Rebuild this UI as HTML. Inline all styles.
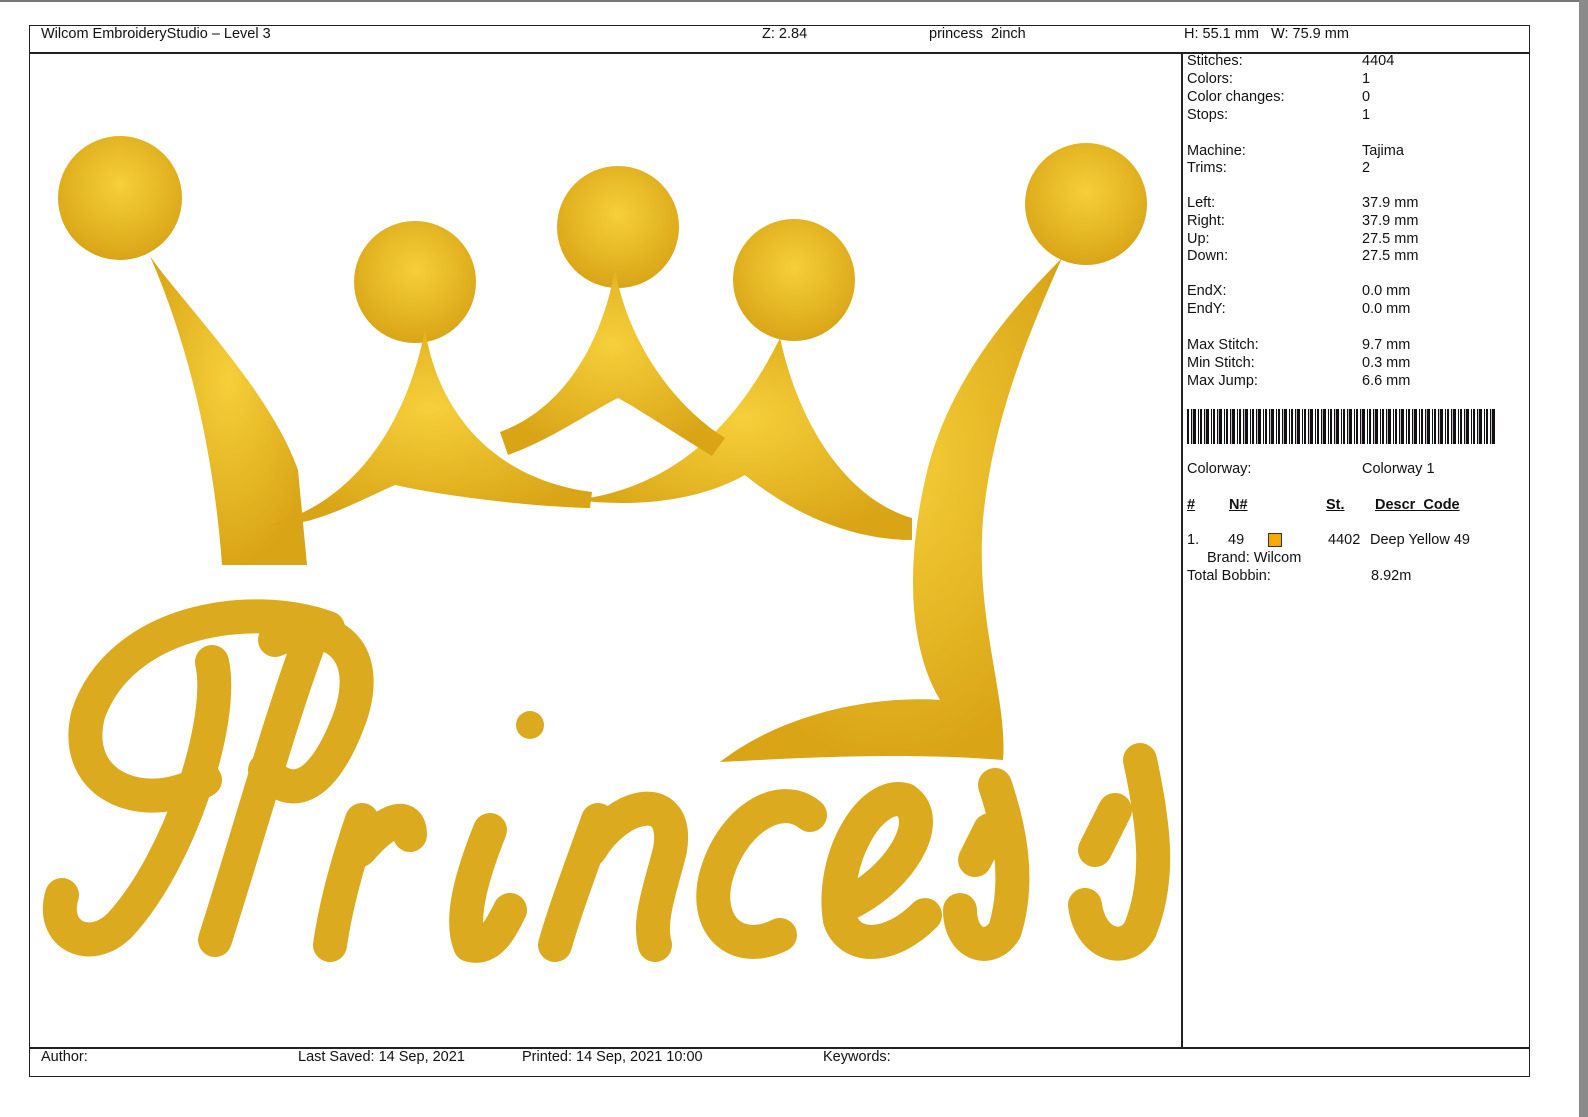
<!DOCTYPE html>
<html><head><meta charset="utf-8"><style>
body{margin:0;width:1588px;height:1117px;background:#fff;position:relative;overflow:hidden;font-family:"Liberation Sans Narrow","Liberation Sans",sans-serif;font-size:14.5px;color:#111}
.t{position:absolute;white-space:nowrap;line-height:16px}
.u{text-decoration:underline;font-weight:bold}
</style></head><body>
<div style="position:absolute;left:0;top:0;width:1588px;height:2px;background:#777"></div>
<div style="position:absolute;left:1579px;top:0;width:9px;height:1117px;background:#8a8a8a"></div>
<div style="position:absolute;left:29px;top:25px;width:1499px;height:1050px;border:1.5px solid #222"></div>
<div style="position:absolute;left:29px;top:52px;width:1500px;height:1.5px;background:#222"></div>
<div style="position:absolute;left:29px;top:1047px;width:1500px;height:1.5px;background:#222"></div>
<div style="position:absolute;left:1181px;top:52px;width:1.5px;height:996px;background:#222"></div>

<div class="t" style="left:41px;top:26px">Wilcom EmbroideryStudio – Level 3</div>
<div class="t" style="left:762px;top:26px">Z: 2.84</div>
<div class="t" style="left:929px;top:26px">princess &nbsp;2inch</div>
<div class="t" style="left:1184px;top:26px">H: 55.1 mm &nbsp;&nbsp;W: 75.9 mm</div>

<div class="t" style="left:41px;top:1049px">Author:</div>
<div class="t" style="left:298px;top:1049px">Last Saved: 14 Sep, 2021</div>
<div class="t" style="left:522px;top:1049px">Printed: 14 Sep, 2021 10:00</div>
<div class="t" style="left:823px;top:1049px">Keywords:</div>

<div class="t" style="left:1187px;top:53px">Stitches:</div><div class="t" style="left:1362px;top:53px">4404</div>
<div class="t" style="left:1187px;top:71px">Colors:</div><div class="t" style="left:1362px;top:71px">1</div>
<div class="t" style="left:1187px;top:89px">Color changes:</div><div class="t" style="left:1362px;top:89px">0</div>
<div class="t" style="left:1187px;top:107px">Stops:</div><div class="t" style="left:1362px;top:107px">1</div>
<div class="t" style="left:1187px;top:143px">Machine:</div><div class="t" style="left:1362px;top:143px">Tajima</div>
<div class="t" style="left:1187px;top:160px">Trims:</div><div class="t" style="left:1362px;top:160px">2</div>
<div class="t" style="left:1187px;top:195px">Left:</div><div class="t" style="left:1362px;top:195px">37.9 mm</div>
<div class="t" style="left:1187px;top:213px">Right:</div><div class="t" style="left:1362px;top:213px">37.9 mm</div>
<div class="t" style="left:1187px;top:231px">Up:</div><div class="t" style="left:1362px;top:231px">27.5 mm</div>
<div class="t" style="left:1187px;top:248px">Down:</div><div class="t" style="left:1362px;top:248px">27.5 mm</div>
<div class="t" style="left:1187px;top:283px">EndX:</div><div class="t" style="left:1362px;top:283px">0.0 mm</div>
<div class="t" style="left:1187px;top:301px">EndY:</div><div class="t" style="left:1362px;top:301px">0.0 mm</div>
<div class="t" style="left:1187px;top:337px">Max Stitch:</div><div class="t" style="left:1362px;top:337px">9.7 mm</div>
<div class="t" style="left:1187px;top:355px">Min Stitch:</div><div class="t" style="left:1362px;top:355px">0.3 mm</div>
<div class="t" style="left:1187px;top:373px">Max Jump:</div><div class="t" style="left:1362px;top:373px">6.6 mm</div>

<div style="position:absolute;left:1187px;top:409px;width:308px;height:35px;background:repeating-linear-gradient(90deg,#111 0 2px,#fff 2px 4px,#111 4px 5px,#c8b8c8 5px 6px,#111 6px 9px,#fff 9px 11px,#111 11px 12px,#fff 12px 13px)"></div>

<div class="t" style="left:1187px;top:461px">Colorway:</div><div class="t" style="left:1362px;top:461px">Colorway 1</div>
<div class="t u" style="left:1187px;top:497px">#</div>
<div class="t u" style="left:1229px;top:497px">N#</div>
<div class="t u" style="left:1326px;top:497px">St.</div>
<div class="t u" style="left:1375px;top:497px">Descr_Code</div>
<div class="t" style="left:1187px;top:532px">1.</div>
<div class="t" style="left:1228px;top:532px">49</div>
<div style="position:absolute;left:1268px;top:533px;width:12px;height:12px;background:#f5a800;border:1px solid #333"></div>
<div class="t" style="left:1328px;top:532px">4402</div>
<div class="t" style="left:1370px;top:532px">Deep Yellow 49</div>
<div class="t" style="left:1207px;top:550px">Brand: Wilcom</div>
<div class="t" style="left:1187px;top:568px">Total Bobbin:</div><div class="t" style="left:1371px;top:568px">8.92m</div>

<svg style="position:absolute;left:0;top:0" width="1180" height="1045" viewBox="0 0 1180 1045">
<defs>
<radialGradient id="g" cx="50%" cy="40%" r="60%"><stop offset="0" stop-color="#f6cf3a"/><stop offset="1" stop-color="#d9a516"/></radialGradient>
</defs>
<g fill="url(#g)">
<circle cx="120" cy="198" r="62"/>
<circle cx="415" cy="282" r="61"/>
<circle cx="618" cy="227" r="61"/>
<circle cx="794" cy="280" r="61"/>
<circle cx="1086" cy="204" r="61"/>
<path d="M150,256 C180,300 270,390 298,470 L307,565 L222,565 C215,470 195,360 150,256Z"/>
<path d="M268,525 C350,505 405,430 425,330 C440,420 500,480 592,492 L590,508 C520,506 440,495 395,485 C350,505 310,528 268,525Z"/>
<path d="M575,500 C660,490 730,440 780,338 C800,430 850,500 912,518 L912,540 C860,540 800,520 745,475 C700,500 640,508 575,500Z"/>
<path d="M500,432 C560,410 600,350 615,270 C630,350 680,410 725,438 L712,456 C670,430 640,410 618,398 C590,412 550,440 508,455Z"/>
<path d="M1062,258 C1000,320 945,390 925,480 C905,570 910,650 940,700 C870,695 780,715 720,762 C800,758 900,752 1003,760 C1008,700 975,620 983,520 C992,420 1030,330 1062,258Z"/>
</g>
<g fill="none" stroke="#dcaa1e" stroke-width="34" stroke-linecap="round" stroke-linejoin="round">
<path d="M328,628 C250,600 120,620 88,715 C70,790 150,815 205,780"/>
<path d="M212,662 C225,720 180,860 120,925 C90,955 50,935 62,895"/>
<path d="M310,640 C280,720 250,830 215,940"/>
<path d="M275,640 C330,615 380,650 345,730 C320,790 290,800 265,770"/>
<path d="M362,820 C345,870 335,910 330,945 M360,850 C385,820 410,810 410,835"/>
<path d="M490,830 C470,880 460,920 470,945 C490,950 500,930 510,910"/>
<circle cx="530" cy="725" r="14" fill="#dcaa1e" stroke="none"/>
<path d="M598,820 C580,870 565,910 555,945 M590,850 C620,800 680,790 670,850 C660,890 648,920 655,945"/>
<path d="M810,815 C780,790 730,820 715,880 C705,930 740,955 780,935"/>
<path d="M845,905 C900,880 935,820 905,800 C870,790 830,860 840,920 C850,950 890,950 925,915"/>
<path d="M995,785 C1010,830 1020,880 1005,930 C990,955 960,945 960,910 M990,830 L975,860"/>
<path d="M1140,760 C1155,830 1160,880 1140,930 C1125,955 1090,945 1085,905 M1115,810 L1095,850"/>
</g>
</svg>
</body></html>
